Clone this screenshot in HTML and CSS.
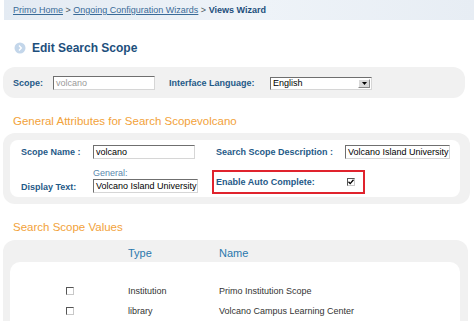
FILE: index.html
```html
<!DOCTYPE html>
<html lang="en">
<head>
    <meta charset="UTF-8">
    <title>Edit Search Scope</title>
    <link rel="stylesheet" href="styles.css">
</head>
<body>
    <div class="crumbs">
        <a href="#">Primo Home</a> &gt; <a href="#">Ongoing Configuration Wizards</a> &gt; <b>Views Wizard</b>
    </div>

    <h1 class="title">
        <svg class="bullet" width="12" height="12" viewBox="0 0 12 12">
            <circle cx="6" cy="6" r="5.5" fill="#c3d6ea"/>
            <path d="M5 3.5 L7.3 6 L5 8.5" fill="none" stroke="#fff" stroke-width="1.4"/>
        </svg>
        Edit Search Scope
    </h1>

    <div class="scope-bar">
        <span class="lbl lbl-scope">Scope:</span>
        <span class="field field-scope disabled">volcano</span>
        <span class="lbl lbl-lang">Interface Language:</span>
        <span class="select">
            <span class="select-text">English</span>
            <span class="select-btn">
                <svg width="5" height="3" viewBox="0 0 5 3"><path d="M0 0 H5 L2.5 3 Z" fill="#000"/></svg>
            </span>
        </span>
    </div>

    <h2 class="section-title">General Attributes for Search Scopevolcano</h2>

    <div class="panel">
        <div class="attrs">
            <span class="lbl">Scope Name :</span>
            <span class="field field-name">volcano</span>
            <span class="lbl lbl-desc">Search Scope Description :</span>
            <span class="field field-desc">Volcano Island University</span>

            <span class="lbl lbl-display">Display Text:</span>
            <div class="display-cell">
                <span class="sub-lbl">General:</span>
                <span class="field field-display">Volcano Island University</span>
            </div>
            <div class="highlight">
                <span class="lbl lbl-auto">Enable Auto Complete:</span>
                <span class="check checked">
                    <svg width="6" height="6" viewBox="0 0 6 6"><path d="M0.5 2.8 L2.2 4.6 L5.5 0.8" fill="none" stroke="#000" stroke-width="1.3"/></svg>
                </span>
            </div>
        </div>
    </div>

    <h2 class="section-title section-values">Search Scope Values</h2>

    <div class="values">
        <div class="values-head">
            <span></span>
            <span>Type</span>
            <span>Name</span>
        </div>
        <div class="values-body">
            <div class="values-row">
                <span class="check"></span>
                <span>Institution</span>
                <span>Primo Institution Scope</span>
            </div>
            <div class="values-row">
                <span class="check"></span>
                <span>library</span>
                <span>Volcano Campus Learning Center</span>
            </div>
        </div>
    </div>
</body>
</html>
```

FILE: styles.css
```css
body {
    margin: 0;
    font-family: "Liberation Sans", Arial, sans-serif;
    font-size: 9px;
    color: #333;
    background-color: #fff;
}
.crumbs {
    margin-left: 4px;
    height: 20px;
    line-height: 20px;
    padding-left: 9px;
    color: #4a5560;
    background: linear-gradient(to right, #e4ebf3, #eef3f8 55%, #e7edf4);
}
.crumbs a {
    color: #3a6b98;
}
.crumbs b {
    color: #1d4f7c;
}
.title {
    display: flex;
    align-items: center;
    gap: 6px;
    height: 13px;
    margin: 21px 0 0 14px;
    font-size: 12px;
    color: #1d4f7c;
}
.lbl {
    font-weight: bold;
    color: #1f5a88;
}
.field {
    display: block;
    box-sizing: border-box;
    height: 14px;
    line-height: 12px;
    padding: 0 2px;
    border: 1px solid;
    border-color: #6f6f6f #d6d6d6 #d6d6d6 #6f6f6f;
    background-color: #fff;
    color: #000;
    white-space: nowrap;
    overflow: hidden;
}
.field.disabled {
    color: #9a9a9a;
}
.scope-bar {
    display: flex;
    align-items: center;
    height: 31px;
    margin: 13px 9px 0 3px;
    padding-left: 10px;
    border-radius: 12px;
    background-color: #f1f1f1;
}
.lbl-scope {
    width: 40px;
}
.field-scope {
    width: 102px;
}
.lbl-lang {
    width: 101px;
    margin-left: 14px;
}
.select {
    display: flex;
    box-sizing: border-box;
    width: 102px;
    height: 13px;
    margin-top: 2px;
    border: 1px solid;
    border-color: #6f6f6f #d6d6d6 #d6d6d6 #6f6f6f;
    background-color: #fff;
    color: #000;
}
.select-text {
    flex: 1;
    line-height: 11px;
    padding-left: 2px;
}
.select-btn {
    display: flex;
    align-items: center;
    justify-content: center;
    width: 10px;
    margin: 1px 1px 1px 0;
    background-color: #d9d9d9;
    border: 1px solid;
    border-color: #fff #888 #888 #fff;
}
.section-title {
    margin: 17px 0 5px 13px;
    font-size: 11.5px;
    line-height: 13px;
    font-weight: normal;
    color: #f2a23a;
}
.section-values {
    margin-top: 17px;
    margin-bottom: 6px;
}
.panel {
    margin: 0 4px 0 3px;
    padding: 7px 10px 7px 7px;
    border-radius: 12px;
    background-color: #f1f1f1;
}
.attrs {
    display: grid;
    grid-template-columns: 72px 119px 133px auto;
    grid-template-rows: 14px 25px;
    row-gap: 9px;
    align-items: center;
    padding: 5px 0 4px 11px;
    border-radius: 8px;
    background-color: #fff;
}
.field-name {
    width: 102px;
}
.lbl-desc {
    padding-left: 4px;
}
.field-desc {
    width: 105px;
}
.lbl-display {
    align-self: end;
    margin-bottom: 1px;
}
.display-cell {
    display: flex;
    flex-direction: column;
    align-self: stretch;
}
.sub-lbl {
    line-height: 10px;
    height: 11px;
    color: #5b87ad;
}
.field-display {
    width: 105px;
    height: 15px;
}
.highlight {
    grid-column: 3 / 5;
    display: flex;
    align-items: center;
    box-sizing: border-box;
    width: 153px;
    height: 24px;
    margin-top: 2px;
    padding-left: 2px;
    border: 2px solid #e0232d;
}
.lbl-auto {
    width: 131px;
}
.check {
    display: flex;
    align-items: center;
    justify-content: center;
    box-sizing: border-box;
    width: 8px;
    height: 8px;
    border: 1px solid;
    border-color: #555 #c8c8c8 #c8c8c8 #555;
    background-color: #fff;
}
.values {
    margin: 0 6px 0 3px;
    padding: 0 8px 0 7px;
    border-radius: 12px 12px 0 0;
    background-color: #f1f1f1;
}
.values-head {
    display: grid;
    grid-template-columns: 118px 91px auto;
    height: 22px;
    line-height: 26px;
    font-size: 11px;
    color: #2a78ad;
}
.values-body {
    padding-top: 19px;
    border-radius: 10px 10px 0 0;
    background-color: #fff;
}
.values-row {
    display: grid;
    grid-template-columns: 118px 91px auto;
    align-items: center;
    height: 20px;
    color: #333;
}
.values-row .check {
    margin-left: 56px;
}
```
